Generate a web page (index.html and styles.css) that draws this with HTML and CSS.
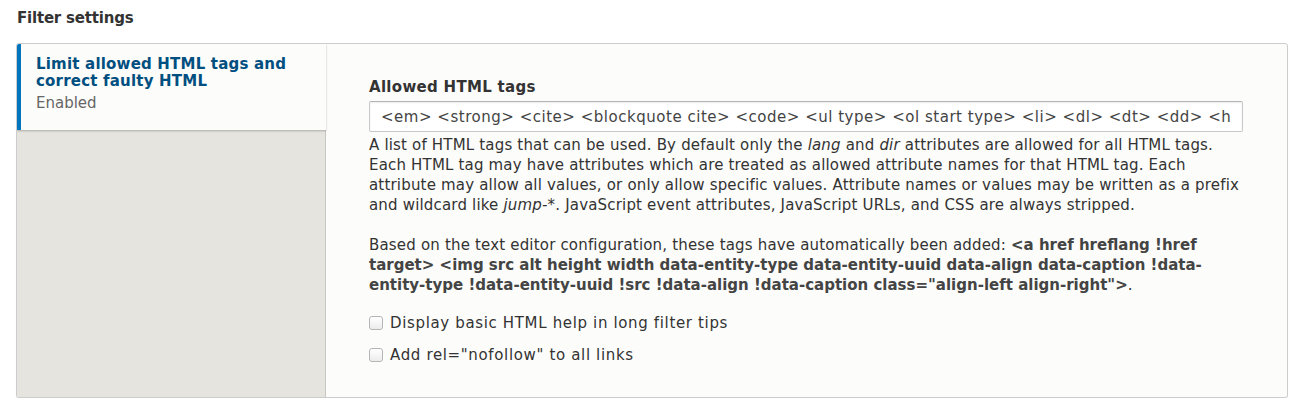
FILE: index.html
```html
<!DOCTYPE html>
<html>
<head>
<meta charset="utf-8">
<link rel="stylesheet" href="styles.css">
</head>
<body>
<div class="page">
  <h2 class="section-title">Filter settings</h2>
  <div class="vtabs">
    <ul class="vtabs-menu">
      <li class="vtab is-selected">
        <a class="vtab-link" href="#">
          <strong class="vtab-title">Limit allowed HTML tags and correct faulty HTML</strong>
          <span class="vtab-summary">Enabled</span>
        </a>
      </li>
    </ul>
    <div class="vtabs-panes">
      <div class="form-item">
        <label class="form-label">Allowed HTML tags</label>
        <input class="form-text" type="text" value="&lt;em&gt; &lt;strong&gt; &lt;cite&gt; &lt;blockquote cite&gt; &lt;code&gt; &lt;ul type&gt; &lt;ol start type&gt; &lt;li&gt; &lt;dl&gt; &lt;dt&gt; &lt;dd&gt; &lt;h2 id&gt; &lt;h3 id&gt; &lt;h4 id&gt; &lt;h5 id&gt; &lt;h6 id&gt;">
        <div class="description">
          <p class="desc-p">A list of HTML tags that can be used. By default only the <em>lang</em> and <em>dir</em> attributes are allowed for all HTML tags. Each HTML tag may have attributes which are treated as allowed attribute names for that HTML tag. Each attribute may allow all values, or only allow specific values. Attribute names or values may be written as a prefix and wildcard like <em>jump-*</em>. JavaScript event attributes, JavaScript URLs, and CSS are always stripped.</p>
          <p class="desc-p">Based on the text editor configuration, these tags have automatically been added: <strong>&lt;a href hreflang !href target&gt; &lt;img src alt height width data-entity-type data-entity-uuid data-align data-caption !data-entity-type !data-entity-uuid !src !data-align !data-caption class="align-left align-right"&gt;</strong>.</p>
        </div>
      </div>
      <div class="checkbox-item">
        <span class="checkbox"></span>
        <label class="checkbox-label">Display basic HTML help in long filter tips</label>
      </div>
      <div class="checkbox-item">
        <span class="checkbox"></span>
        <label class="checkbox-label">Add rel="nofollow" to all links</label>
      </div>
    </div>
  </div>
</div>
</body>
</html>
```

FILE: styles.css
```css
html, body {
  margin: 0;
  padding: 0;
  background: #ffffff;
}
body {
  font-family: "DejaVu Sans", "Liberation Sans", sans-serif;
  font-size: 15px;
  color: #333333;
}
.page {
  padding: 8px 12px 0 16px;
}
.section-title {
  margin: 0 0 0 1px;
  font-size: 15px;
  font-weight: bold;
  line-height: 20px;
  letter-spacing: -0.2px;
  color: #333;
}
.vtabs {
  margin-top: 15px;
  display: flex;
  border: 1px solid #cccccc;
  border-radius: 3px;
  height: 353px;
  background: #fcfcfa;
  overflow: hidden;
  box-shadow: 0 1px 1px rgba(0,0,0,0.08);
}
.vtabs-menu {
  list-style: none;
  margin: 0;
  padding: 0;
  width: 308px;
  flex: none;
  background: #e6e4df;
  border-right: 1px solid #c8c6c0;
}
.vtab {
  background: #fcfcfa;
  border-left: 4px solid #0074bd;
  margin-right: -1px;
  box-shadow: 0 1px 2px rgba(0,0,0,0.25);
  position: relative;
}
.vtab-link {
  display: block;
  text-decoration: none;
  padding: 12px 10px 17px 15px;
}
.vtab-title {
  display: block;
  font-weight: bold;
  color: #004f80;
  font-size: 15px;
  line-height: 17px;
  letter-spacing: 0.2px;
}
.vtab-summary {
  display: block;
  color: #666666;
  font-size: 15px;
  line-height: 20px;
  margin-top: 3px;
}
.vtabs-panes {
  flex: 1;
  padding: 33px 44px 0 43px;
}
.form-item {
  margin-bottom: 18px;
}
.form-label {
  display: block;
  font-weight: bold;
  font-size: 15px;
  line-height: 20px;
  letter-spacing: 0.3px;
  color: #333;
  margin-bottom: 4px;
}
.form-text {
  display: block;
  box-sizing: border-box;
  width: 874px;
  height: 31px;
  padding: 0 11px;
  border: 1px solid #c8c8c8;
  border-top-color: #b4b4b4;
  border-radius: 2px;
  background: #fff;
  font-family: "DejaVu Sans", "Liberation Sans", sans-serif;
  font-size: 15px;
  letter-spacing: 0.52px;
  color: #444;
  box-shadow: inset 0 1px 2px rgba(0,0,0,0.08);
}
.description {
  margin-top: 3px;
  line-height: 20px;
  color: #333;
  letter-spacing: 0.18px;
}
.desc-p {
  margin: 0 0 20px 0;
}
.desc-p:last-child {
  margin-bottom: 0;
}
.desc-p strong {
  color: #444;
  letter-spacing: 0;
}
.checkbox-item {
  display: flex;
  align-items: center;
  height: 20px;
  margin: 0 0 12px 0;
  font-size: 15px;
}
.checkbox {
  width: 12px;
  height: 12px;
  border: 1px solid #b5b5b5;
  border-radius: 3px;
  background: linear-gradient(#ffffff, #ececec);
  margin-right: 7px;
  flex: none;
}
.checkbox-label {
  color: #333;
  letter-spacing: 0.65px;
}
```
